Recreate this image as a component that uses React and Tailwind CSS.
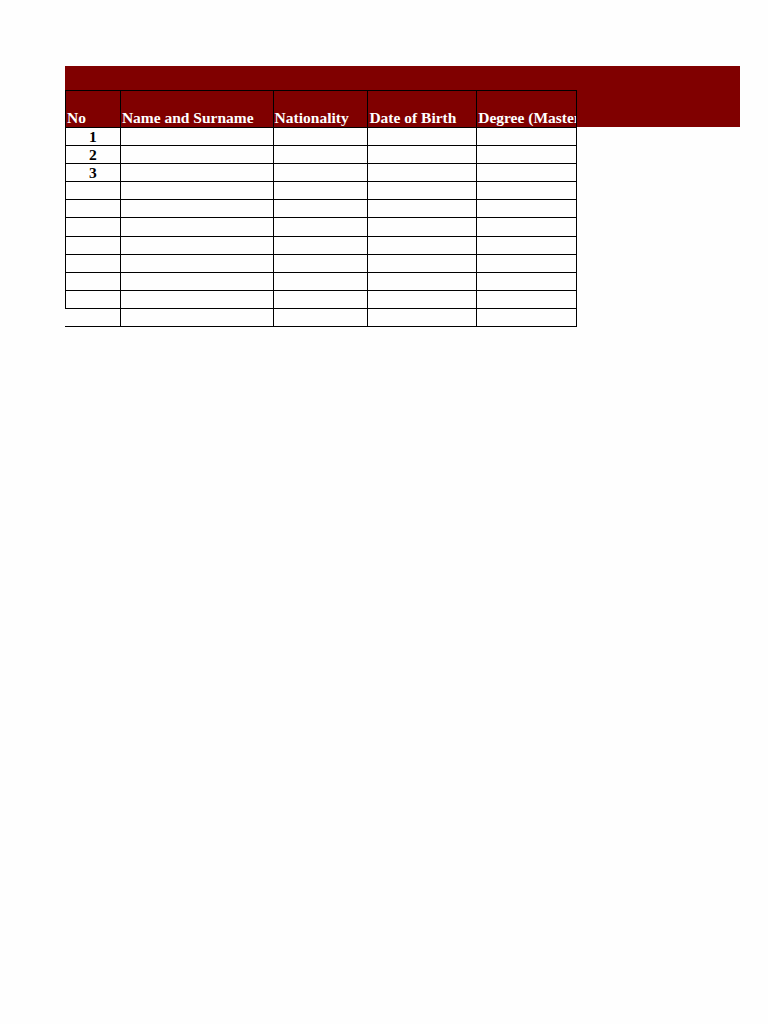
const columns = [
  { label: 'No', w: 'w-[55px]' },
  { label: 'Name and Surname', w: 'w-[153px]' },
  { label: 'Nationality', w: 'w-[95px]' },
  { label: 'Date of Birth', w: 'w-[109px]' },
  { label: 'Degree (Master', w: 'w-[100px]' },
];

const rows = ['1', '2', '3', '', '', '', '', '', '', '', ''];

function HeaderRow() {
  return (
    <div className="flex h-[38px] w-[512px] border-t border-b border-l border-black">
      {columns.map((col) => (
        <div
          key={col.label}
          className={`${col.w} flex items-end overflow-hidden whitespace-nowrap border-r border-black pl-[1px] text-[15.5px] font-bold leading-[18px] text-white`}
        >
          {col.label}
        </div>
      ))}
    </div>
  );
}

function BodyRow({ no, last }) {
  return (
    <div className={`flex h-[18.1px] w-[512px] border-b border-black ${last ? '' : 'border-l'}`}>
      {columns.map((col, i) => (
        <div
          key={col.label}
          className={`${col.w} flex items-end justify-center border-r border-black text-[15.5px] font-bold leading-[17px] text-black ${i === 0 && last ? 'ml-[1px]' : ''}`}
        >
          {i === 0 ? no : ''}
        </div>
      ))}
    </div>
  );
}

export default function App() {
  return (
    <div
      className="min-h-[1024px] w-[768px] bg-[#fefefe] pt-[66px] pl-[65px]"
      style={{ fontFamily: '"Liberation Serif", "Times New Roman", serif' }}
    >
      <div className="w-[675px]">
        <div className="h-[61px] bg-[#800000] pt-[24px]">
          <HeaderRow />
        </div>
        <div className="mt-[1px] flex flex-col">
          {rows.map((no, i) => (
            <BodyRow key={i} no={no} last={i === rows.length - 1} />
          ))}
        </div>
      </div>
    </div>
  );
}
